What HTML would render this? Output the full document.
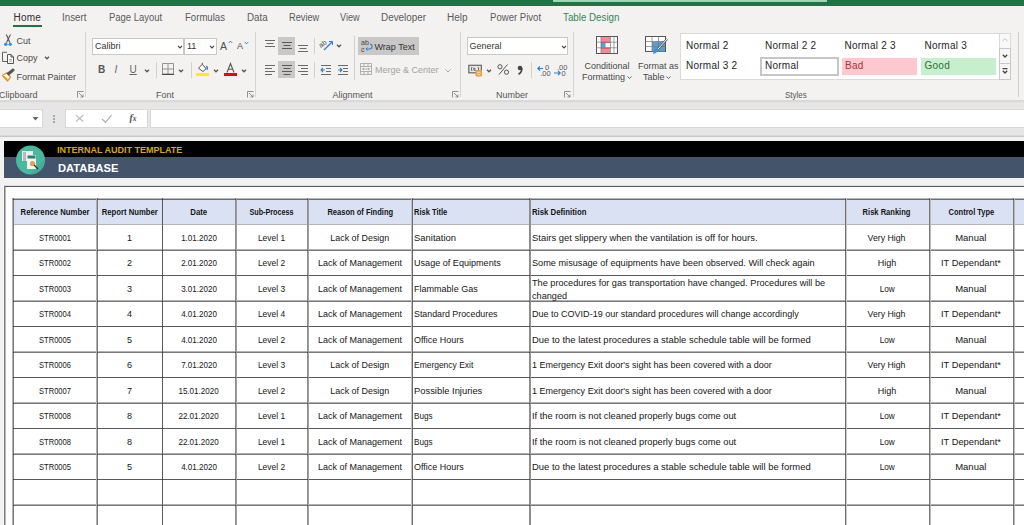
<!DOCTYPE html>
<html><head><meta charset="utf-8">
<style>
*{margin:0;padding:0;box-sizing:border-box}
html,body{width:1024px;height:525px;overflow:hidden;background:#f2f2f2;font-family:"Liberation Sans",sans-serif;position:relative}
.a{position:absolute}
.t{position:absolute;white-space:pre;line-height:1}
.hl{position:absolute;height:2px;background:linear-gradient(#a8a8a8,#6c6c6c)}
.vl{position:absolute;width:2px;background:linear-gradient(90deg,#a0a0a0,#6c6c6c)}
.ct{position:absolute;white-space:pre;font-size:9px;color:#161616;line-height:12px}
.hd{position:absolute;white-space:pre;font-size:9px;font-weight:bold;color:#141414;line-height:12px}
</style></head><body>

<!-- top bar -->
<div class="a" style="left:0;top:0;width:1024px;height:6px;background:#217346"></div>
<div class="a" style="left:553px;top:0;width:274px;height:2px;background:#a6d3b8"></div>
<div class="a" style="left:0;top:6px;width:1024px;height:95px;background:#f3f2f1"></div>

<!-- tabs -->
<div class="t" style="left:13.5px;top:12.9px;font-size:10px;color:#303030;letter-spacing:0.2px">Home</div>
<div class="a" style="left:13px;top:25px;width:29px;height:2px;background:#217346"></div>
<div class="t" style="left:62px;top:12.9px;font-size:10px;color:#5a5a5a;transform:scaleX(0.975);transform-origin:0 0">Insert</div>
<div class="t" style="left:109px;top:12.9px;font-size:10px;color:#5a5a5a;transform:scaleX(0.948);transform-origin:0 0">Page Layout</div>
<div class="t" style="left:185px;top:12.9px;font-size:10px;color:#5a5a5a;transform:scaleX(0.959);transform-origin:0 0">Formulas</div>
<div class="t" style="left:246.5px;top:12.9px;font-size:10px;color:#5a5a5a;transform:scaleX(0.98);transform-origin:0 0">Data</div>
<div class="t" style="left:288.5px;top:12.9px;font-size:10px;color:#5a5a5a;transform:scaleX(0.922);transform-origin:0 0">Review</div>
<div class="t" style="left:339.5px;top:12.9px;font-size:10px;color:#5a5a5a;transform:scaleX(0.909);transform-origin:0 0">View</div>
<div class="t" style="left:381px;top:12.9px;font-size:10px;color:#5a5a5a;transform:scaleX(0.989);transform-origin:0 0">Developer</div>
<div class="t" style="left:447px;top:12.9px;font-size:10px;color:#5a5a5a">Help</div>
<div class="t" style="left:489.5px;top:12.9px;font-size:10px;color:#5a5a5a;transform:scaleX(0.958);transform-origin:0 0">Power Pivot</div>
<div class="t" style="left:562.5px;top:12.9px;font-size:10px;color:#2e8a57;transform:scaleX(0.976);transform-origin:0 0">Table Design</div>

<!-- Clipboard group -->
<svg class="a" style="left:0;top:30px" width="16" height="20" viewBox="0 0 16 20">
 <path d="M6.3 4.5 L9.8 12.5 M10.5 4.5 L6.5 12.5" stroke="#555" stroke-width="1.1" fill="none"/>
 <circle cx="5.8" cy="14.2" r="1.8" fill="#3d8fd8"/>
 <circle cx="10.2" cy="14.2" r="1.7" fill="#3d8fd8"/>
</svg>
<div class="t" style="left:16.5px;top:36.9px;font-size:9px;color:#484848">Cut</div>
<svg class="a" style="left:0;top:48px" width="16" height="20" viewBox="0 0 16 20">
 <path d="M7 13.5 H2.5 V4.3 H7" stroke="#606060" stroke-width="1" fill="none"/>
 <path d="M7.5 6.5 H11 L13.5 9 V15.5 H7.5 Z" fill="#fafafa" stroke="#555" stroke-width="1"/>
 <path d="M11 6.5 V9 H13.5" stroke="#555" stroke-width="1" fill="none"/>
 <path d="M9.3 11.5 H11.7 M9.3 13.1 H11.7" stroke="#888" stroke-width="0.8"/>
</svg>
<div class="t" style="left:16.5px;top:54.3px;font-size:9px;color:#484848">Copy</div>
<svg class="a" style="left:44px;top:56px" width="6" height="4" viewBox="0 0 6 4"><path d="M1 0.8 L3 2.8 L5 0.8" stroke="#555" fill="none" stroke-width="1.3"/></svg>
<svg class="a" style="left:0;top:64px" width="16" height="20" viewBox="0 0 16 20">
 <path d="M2.5 11.5 L6.8 8.8 L10.5 13 L7.5 17 Z" fill="#fff" stroke="#e29a1c" stroke-width="1.3" stroke-linejoin="round"/>
 <path d="M4 12.5 L7.5 15.5" stroke="#e29a1c" stroke-width="1.2"/>
 <path d="M7.5 10.5 L12.5 6.5" stroke="#555" stroke-width="3"/>
 <circle cx="13" cy="6" r="1.6" fill="#555"/>
</svg>
<div class="t" style="left:16.5px;top:73.0px;font-size:9px;color:#484848">Format Painter</div>
<div class="t" style="left:-1px;top:91.1px;font-size:9px;color:#555">Clipboard</div>
<svg class="a" style="left:77px;top:91px" width="7" height="7" viewBox="0 0 7 7"><path d="M0.5 6.5 V0.5 H6.5 M2 2 L6 6 M6 3.5 V6 H3.5" stroke="#777" fill="none" stroke-width="0.8"/></svg>
<div class="a" style="left:85px;top:32px;width:1px;height:65px;background:#d4d4d4"></div>

<!-- Font group -->
<div class="a" style="left:92px;top:38px;width:92px;height:17px;background:#fff;border:1px solid #c8c8c8"></div>
<div class="t" style="left:95px;top:42.2px;font-size:9px;color:#333">Calibri</div>
<svg class="a" style="left:177px;top:45px" width="6" height="4" viewBox="0 0 6 4"><path d="M1 0.8 L3 2.8 L5 0.8" stroke="#444" fill="none" stroke-width="1.2"/></svg>
<div class="a" style="left:184px;top:38px;width:33px;height:17px;background:#fff;border:1px solid #c8c8c8"></div>
<div class="t" style="left:187px;top:42.2px;font-size:9px;color:#333">11</div>
<svg class="a" style="left:209px;top:45px" width="6" height="4" viewBox="0 0 6 4"><path d="M1 0.8 L3 2.8 L5 0.8" stroke="#444" fill="none" stroke-width="1.2"/></svg>
<div class="t" style="left:220px;top:40.6px;font-size:10.5px;color:#505050">A</div>
<svg class="a" style="left:228px;top:40px" width="5" height="4" viewBox="0 0 5 4"><path d="M0.7 3 L2.5 1.2 L4.3 3" stroke="#2f7fd0" fill="none" stroke-width="1"/></svg>
<div class="t" style="left:237px;top:41.8px;font-size:9px;color:#505050">A</div>
<svg class="a" style="left:244px;top:40.5px" width="5" height="4" viewBox="0 0 5 4"><path d="M0.7 1 L2.5 2.8 L4.3 1" stroke="#2f7fd0" fill="none" stroke-width="1"/></svg>
<div class="t" style="left:98px;top:64.5px;font-size:10px;font-weight:bold;color:#555">B</div>
<div class="t" style="left:114.5px;top:64.5px;font-size:10px;font-style:italic;color:#666">I</div>
<div class="t" style="left:129.5px;top:64.5px;font-size:10px;color:#666;text-decoration:underline">U</div>
<svg class="a" style="left:143.5px;top:69px" width="6" height="4" viewBox="0 0 6 4"><path d="M1 0.8 L3 2.8 L5 0.8" stroke="#555" fill="none" stroke-width="1.3"/></svg>
<div class="a" style="left:156px;top:62px;width:1px;height:16px;background:#d0d0d0"></div>
<svg class="a" style="left:162px;top:63px" width="12" height="12" viewBox="0 0 12 12"><path d="M0.5 0.5 H11.5 V11.5 H0.5 Z M6 0.5 V11.5 M0.5 6 H11.5" stroke="#8a8a8a" fill="none" stroke-width="0.9"/><path d="M0 11.3 H12" stroke="#444" stroke-width="1.2"/></svg>
<svg class="a" style="left:178px;top:69px" width="6" height="4" viewBox="0 0 6 4"><path d="M1 0.8 L3 2.8 L5 0.8" stroke="#555" fill="none" stroke-width="1.3"/></svg>
<div class="a" style="left:190.5px;top:62px;width:1px;height:16px;background:#d0d0d0"></div>
<svg class="a" style="left:196px;top:62px" width="13" height="11" viewBox="0 0 13 11"><path d="M2.5 6.3 L6.3 2.2 L10 6.8 L7 9.5 Z" fill="#fff" stroke="#555" stroke-width="1"/><path d="M6.3 2.2 V0.8" stroke="#555" stroke-width="1"/><path d="M10.3 4 Q12 5.5 11 7.8" stroke="#2f7fd0" fill="none" stroke-width="1.4"/></svg>
<div class="a" style="left:196px;top:73px;width:13px;height:3px;background:#ffee00"></div>
<svg class="a" style="left:213px;top:69px" width="6" height="4" viewBox="0 0 6 4"><path d="M1 0.8 L3 2.8 L5 0.8" stroke="#555" fill="none" stroke-width="1.3"/></svg>
<svg class="a" style="left:224px;top:62px" width="13" height="11" viewBox="0 0 13 11"><path d="M3 10.5 L6.5 1.5 L10 10.5 M4.3 7.3 H8.7" stroke="#555" fill="none" stroke-width="1.1"/></svg>
<div class="a" style="left:224px;top:73px;width:13px;height:3px;background:#f20000"></div>
<svg class="a" style="left:241px;top:69px" width="6" height="4" viewBox="0 0 6 4"><path d="M1 0.8 L3 2.8 L5 0.8" stroke="#555" fill="none" stroke-width="1.3"/></svg>
<div class="t" style="left:156px;top:91.1px;font-size:9px;color:#555">Font</div>
<svg class="a" style="left:247px;top:91px" width="7" height="7" viewBox="0 0 7 7"><path d="M0.5 6.5 V0.5 H6.5 M2 2 L6 6 M6 3.5 V6 H3.5" stroke="#777" fill="none" stroke-width="0.8"/></svg>
<div class="a" style="left:255px;top:32px;width:1px;height:65px;background:#d4d4d4"></div>

<!-- Alignment group -->
<svg class="a" style="left:264px;top:39px" width="12" height="10" viewBox="0 0 12 10"><path d="M1 1.5 H11 M2.5 4.5 H9.5 M1 7.5 H11" stroke="#6a6a6a" stroke-width="1.1"/></svg>
<div class="a" style="left:278px;top:37px;width:17px;height:18px;background:#c8c8c8"></div>
<svg class="a" style="left:281px;top:41px" width="12" height="10" viewBox="0 0 12 10"><path d="M1 1.5 H11 M2.5 4.5 H9.5 M1 7.5 H11" stroke="#5a5a5a" stroke-width="1.1"/></svg>
<svg class="a" style="left:297px;top:44px" width="12" height="10" viewBox="0 0 12 10"><path d="M1 1.5 H11 M2.5 4.5 H9.5 M1 7.5 H11" stroke="#6a6a6a" stroke-width="1.1"/></svg>
<div class="a" style="left:314px;top:38px;width:1px;height:16px;background:#d0d0d0"></div>
<svg class="a" style="left:319px;top:38px" width="15" height="14" viewBox="0 0 15 14"><text x="0" y="8" font-size="7" fill="#444" font-family="Liberation Sans" transform="rotate(-35 4 6)">ab</text><path d="M5 12 L13 4" stroke="#2f7fd0" stroke-width="1.2"/><path d="M10 3.5 L13.5 3.5 L13.5 7" stroke="#2f7fd0" fill="none" stroke-width="1"/></svg>
<svg class="a" style="left:335.5px;top:44px" width="6" height="4" viewBox="0 0 6 4"><path d="M1 0.8 L3 2.8 L5 0.8" stroke="#555" fill="none" stroke-width="1.3"/></svg>
<div class="a" style="left:354px;top:36px;width:1px;height:44px;background:#d0d0d0"></div>
<div class="a" style="left:358px;top:37px;width:61px;height:18px;background:#c8c8c8"></div>
<svg class="a" style="left:360px;top:38px" width="14" height="16" viewBox="0 0 14 16"><text x="1" y="7" font-size="7" fill="#444" font-family="Liberation Sans">ab</text><text x="1" y="14" font-size="7" fill="#444" font-family="Liberation Sans">c</text><path d="M6 11 H10 Q12 11 12 8.5 Q12 6 10 6" stroke="#2f7fd0" fill="none" stroke-width="1.1"/><path d="M7.5 9.5 L6 11 L7.5 12.5" stroke="#2f7fd0" fill="none" stroke-width="1"/></svg>
<div class="t" style="left:374.5px;top:42.5px;font-size:9px;color:#333">Wrap Text</div>
<svg class="a" style="left:264px;top:64px" width="12" height="11" viewBox="0 0 12 11"><path d="M1 1.5 H11 M1 4.5 H8 M1 7.5 H11 M1 10.5 H8" stroke="#6a6a6a" stroke-width="1.1"/></svg>
<div class="a" style="left:278px;top:61px;width:17px;height:17px;background:#c8c8c8"></div>
<svg class="a" style="left:281px;top:64px" width="12" height="11" viewBox="0 0 12 11"><path d="M1 1.5 H11 M2.5 4.5 H9.5 M1 7.5 H11 M2.5 10.5 H9.5" stroke="#5a5a5a" stroke-width="1.1"/></svg>
<svg class="a" style="left:297px;top:64px" width="12" height="11" viewBox="0 0 12 11"><path d="M1 1.5 H11 M4 4.5 H11 M1 7.5 H11 M4 10.5 H11" stroke="#6a6a6a" stroke-width="1.1"/></svg>
<div class="a" style="left:314px;top:62px;width:1px;height:16px;background:#d0d0d0"></div>
<svg class="a" style="left:320px;top:64px" width="12" height="11" viewBox="0 0 12 11"><path d="M1 1.5 H11 M6 4.5 H11 M6 7.5 H11 M1 10.5 H11" stroke="#6a6a6a" stroke-width="1.1"/><path d="M5 6 H1 M3 4 L1 6 L3 8" stroke="#2f7fd0" fill="none" stroke-width="1.1"/></svg>
<svg class="a" style="left:337px;top:64px" width="12" height="11" viewBox="0 0 12 11"><path d="M1 1.5 H11 M6 4.5 H11 M6 7.5 H11 M1 10.5 H11" stroke="#6a6a6a" stroke-width="1.1"/><path d="M1 6 H5 M3 4 L5 6 L3 8" stroke="#2f7fd0" fill="none" stroke-width="1.1"/></svg>
<svg class="a" style="left:360px;top:63px" width="12" height="12" viewBox="0 0 12 12"><path d="M0.5 0.5 H11.5 V11.5 H0.5 Z M0.5 3.5 H11.5 M0.5 8.5 H11.5 M4 0.5 V3.5 M8 0.5 V3.5 M4 8.5 V11.5 M8 8.5 V11.5 M2.5 6 H9.5 M4 5 L2.5 6 L4 7 M8 5 L9.5 6 L8 7" stroke="#a8a8a8" fill="none" stroke-width="0.9"/></svg>
<div class="t" style="left:375px;top:66.3px;font-size:9px;color:#a3a3a3">Merge &amp; Center</div>
<svg class="a" style="left:445px;top:69px" width="6" height="4" viewBox="0 0 6 4"><path d="M0.5 0.5 L3 3 L5.5 0.5" stroke="#aaa" fill="none" stroke-width="1"/></svg>
<div class="t" style="left:332.5px;top:91.1px;font-size:9px;color:#555">Alignment</div>
<svg class="a" style="left:452px;top:91px" width="7" height="7" viewBox="0 0 7 7"><path d="M0.5 6.5 V0.5 H6.5 M2 2 L6 6 M6 3.5 V6 H3.5" stroke="#777" fill="none" stroke-width="0.8"/></svg>
<div class="a" style="left:460px;top:32px;width:1px;height:65px;background:#d4d4d4"></div>

<!-- Number group -->
<div class="a" style="left:467px;top:37px;width:101px;height:18px;background:#fff;border:1px solid #c8c8c8"></div>
<div class="t" style="left:469.5px;top:42.2px;font-size:9px;color:#333">General</div>
<svg class="a" style="left:561px;top:45px" width="6" height="4" viewBox="0 0 6 4"><path d="M1 0.8 L3 2.8 L5 0.8" stroke="#444" fill="none" stroke-width="1.2"/></svg>
<svg class="a" style="left:468px;top:64px" width="16" height="13" viewBox="0 0 16 13">
 <rect x="0.8" y="1.3" width="12.5" height="7.5" fill="#e8e8e8" stroke="#666" stroke-width="1.2"/>
 <path d="M4 3 Q2.5 5 4 7 M10 3 Q11.5 5 10 7" stroke="#666" fill="none" stroke-width="1"/>
 <path d="M6 3.5 Q5 5 6 6.5 H8 M5.5 4.5 H7.5 M5.5 5.5 H7.5" stroke="#666" fill="none" stroke-width="0.7"/>
 <rect x="7.5" y="6" width="6.5" height="6.5" rx="1" fill="#eaa040"/>
 <path d="M9 8.3 H12.5 M9 10 Q10.75 11.5 12.5 10" stroke="#fff" fill="none" stroke-width="0.7"/>
</svg>
<svg class="a" style="left:486px;top:69px" width="6" height="4" viewBox="0 0 6 4"><path d="M1 0.8 L3 2.8 L5 0.8" stroke="#555" fill="none" stroke-width="1.3"/></svg>
<svg class="a" style="left:497px;top:64px" width="13" height="11" viewBox="0 0 13 11">
 <circle cx="3" cy="2.8" r="2.1" fill="none" stroke="#555" stroke-width="1"/>
 <circle cx="9.5" cy="8.2" r="2.1" fill="none" stroke="#555" stroke-width="1"/>
 <path d="M10.5 0.5 L2 10.5" stroke="#555" stroke-width="1"/>
</svg>
<svg class="a" style="left:516px;top:64px" width="8" height="11" viewBox="0 0 8 11">
 <circle cx="4" cy="4" r="2.3" fill="#444"/>
 <path d="M5.8 4 Q6.2 8 2.5 10.3" stroke="#444" fill="none" stroke-width="1.6"/>
</svg>
<div class="a" style="left:531px;top:62px;width:1px;height:16px;background:#d0d0d0"></div>
<svg class="a" style="left:536px;top:63px" width="15" height="13" viewBox="0 0 15 13">
 <path d="M7 5.5 H2 M4 3.3 L1.8 5.5 L4 7.7" stroke="#2f7fd0" fill="none" stroke-width="1.2"/>
 <text x="9" y="6.5" font-size="7.5" fill="#555" font-family="Liberation Sans">0</text>
 <text x="4.2" y="12.5" font-size="7.5" fill="#555" font-family="Liberation Sans">.00</text>
</svg>
<svg class="a" style="left:553px;top:63px" width="15" height="13" viewBox="0 0 15 13">
 <text x="4" y="6.5" font-size="7.5" fill="#555" font-family="Liberation Sans">.00</text>
 <path d="M1 10 H7 M5 7.8 L7.2 10 L5 12.2" stroke="#2f7fd0" fill="none" stroke-width="1.2"/>
 <text x="8.5" y="12.5" font-size="7.5" fill="#555" font-family="Liberation Sans">0</text>
</svg>
<div class="t" style="left:496px;top:91.1px;font-size:9px;color:#555">Number</div>
<svg class="a" style="left:564px;top:91px" width="7" height="7" viewBox="0 0 7 7"><path d="M0.5 6.5 V0.5 H6.5 M2 2 L6 6 M6 3.5 V6 H3.5" stroke="#777" fill="none" stroke-width="0.8"/></svg>
<div class="a" style="left:573px;top:32px;width:1px;height:65px;background:#d4d4d4"></div>

<!-- Styles -->
<svg class="a" style="left:596px;top:36px" width="23" height="18" viewBox="0 0 23 18">
 <rect x="0.5" y="0.5" width="21" height="17" fill="#fff" stroke="#555" stroke-width="1"/>
 <rect x="5" y="1" width="9" height="5" fill="#f48a94"/>
 <rect x="5" y="12" width="9" height="5" fill="#f48a94"/>
 <rect x="5" y="6.5" width="4.5" height="5" fill="#5b9bd5"/>
 <path d="M5 6.5 H14 M5 12 H14" stroke="#e0283a" stroke-width="0.8"/>
 <path d="M5 0.5 V17.5 M14.5 0.5 V17.5 M18 0.5 V17.5 M0.5 6.2 H21.5 M0.5 11.8 H21.5" stroke="#777" stroke-width="0.7"/>
</svg>
<div class="t" style="left:584.5px;top:61.5px;font-size:9px;color:#484848">Conditional</div>
<div class="t" style="left:582px;top:73.2px;font-size:9px;color:#484848">Formatting</div>
<svg class="a" style="left:627px;top:76px" width="5" height="4" viewBox="0 0 5 4"><path d="M0.5 0.5 L2.5 2.5 L4.5 0.5" stroke="#555" fill="none" stroke-width="0.9"/></svg>
<svg class="a" style="left:645px;top:36px" width="25" height="19" viewBox="0 0 25 19">
 <rect x="0.5" y="0.5" width="20" height="15" fill="#fff" stroke="#555"/>
 <rect x="7" y="5.5" width="13" height="10" fill="#5b9bd5"/>
 <path d="M0.5 5.5 H20.5 M0.5 10.5 H20.5 M7 0.5 V15.5 M13.5 0.5 V15.5" stroke="#777" stroke-width="0.7"/>
 <path d="M22 3 L13 13" stroke="#555" stroke-width="2.2"/>
 <path d="M22 3 L13 13" stroke="#fff" stroke-width="1"/>
 <path d="M9 14 Q11 11 13.5 13 Q13 17 8 18 Z" fill="#3d8fd8"/>
</svg>
<div class="t" style="left:638px;top:61.5px;font-size:9px;color:#484848">Format as</div>
<div class="t" style="left:643px;top:73.2px;font-size:9px;color:#484848">Table</div>
<svg class="a" style="left:666px;top:76px" width="5" height="4" viewBox="0 0 5 4"><path d="M0.5 0.5 L2.5 2.5 L4.5 0.5" stroke="#555" fill="none" stroke-width="0.9"/></svg>

<div class="a" style="left:680px;top:33px;width:331px;height:47px;background:#fff;border:1px solid #dadada"></div>
<div class="t" style="left:686px;top:40.5px;font-size:10px;letter-spacing:0.25px;color:#262626">Normal 2</div>
<div class="t" style="left:765px;top:40.5px;font-size:10px;letter-spacing:0.25px;color:#262626">Normal 2 2</div>
<div class="t" style="left:844.5px;top:40.5px;font-size:10px;letter-spacing:0.25px;color:#262626">Normal 2 3</div>
<div class="t" style="left:924.5px;top:40.5px;font-size:10px;letter-spacing:0.25px;color:#262626">Normal 3</div>
<div class="t" style="left:686px;top:61.2px;font-size:10px;letter-spacing:0.25px;color:#262626">Normal 3 2</div>
<div class="a" style="left:760px;top:57px;width:79px;height:19px;border:2px solid #c6c6c6;background:#fff"></div>
<div class="t" style="left:765px;top:61.2px;font-size:10px;letter-spacing:0.25px;color:#262626">Normal</div>
<div class="a" style="left:842px;top:58px;width:75px;height:17px;background:#ffc7ce"></div>
<div class="t" style="left:845px;top:61.2px;font-size:10px;letter-spacing:0.25px;color:#b0303a">Bad</div>
<div class="a" style="left:921px;top:58px;width:75px;height:17px;background:#c6efce"></div>
<div class="t" style="left:924.5px;top:61.2px;font-size:10px;letter-spacing:0.25px;color:#2f6e3a">Good</div>
<div class="a" style="left:999px;top:33px;width:12px;height:47px;border:1px solid #dadada;background:#f8f8f8"></div>
<div class="a" style="left:999px;top:48px;width:12px;height:16px;border:1px solid #c8c8c8;background:#f6f6f6"></div>
<div class="a" style="left:999px;top:63px;width:12px;height:17px;border:1px solid #c8c8c8;background:#f6f6f6"></div>
<svg class="a" style="left:1002px;top:38px" width="6" height="4" viewBox="0 0 6 4"><path d="M0.5 3 L3 0.8 L5.5 3" stroke="#bbb" fill="none" stroke-width="0.9"/></svg>
<svg class="a" style="left:1002px;top:54px" width="6" height="4" viewBox="0 0 6 4"><path d="M0.8 0.8 L3 3 L5.2 0.8" stroke="#444" fill="none" stroke-width="1.3"/></svg>
<svg class="a" style="left:1002px;top:68px" width="6" height="6" viewBox="0 0 6 6"><path d="M0.5 0.7 H5.5 M0.8 2.8 L3 5 L5.2 2.8" stroke="#444" fill="none" stroke-width="1.3"/></svg>
<div class="t" style="left:785px;top:91.1px;font-size:9px;color:#555;transform:scaleX(0.89);transform-origin:0 0">Styles</div>
<div class="a" style="left:1018px;top:32px;width:1px;height:65px;background:#cfcfcf"></div>

<!-- formula bar -->
<div class="a" style="left:0;top:101px;width:1024px;height:34px;background:#e6e6e6"></div>
<div class="a" style="left:0;top:100px;width:1024px;height:2px;background:#d9d9d9"></div>
<div class="a" style="left:0;top:102px;width:1024px;height:1px;background:#e2e2e2"></div>
<div class="a" style="left:0;top:135px;width:1024px;height:1px;background:#d8d8d8"></div>
<div class="a" style="left:0;top:136px;width:1024px;height:1px;background:#c8c8c8"></div>
<div class="a" style="left:0;top:109px;width:43px;height:19px;background:#fff;border:1px solid #d8d8d8;border-left:none"></div>
<svg class="a" style="left:32px;top:116.5px" width="7" height="4" viewBox="0 0 7 4"><path d="M0.5 0 H6.5 L3.5 3.5 Z" fill="#666"/></svg>
<div class="a" style="left:53px;top:114.5px;width:2px;height:2px;background:#aaa"></div>
<div class="a" style="left:53px;top:117.5px;width:2px;height:2px;background:#aaa"></div>
<div class="a" style="left:53px;top:120.5px;width:2px;height:2px;background:#aaa"></div>
<div class="a" style="left:65px;top:109px;width:83px;height:19px;background:#fff;border:1px solid #d8d8d8"></div>
<svg class="a" style="left:75px;top:114px" width="10" height="9" viewBox="0 0 10 9"><path d="M1 1.2 L8.2 7.6 M8.2 1.2 L1 7.6" stroke="#b4b4b4" stroke-width="1.1"/></svg>
<svg class="a" style="left:101px;top:114px" width="12" height="10" viewBox="0 0 12 10"><path d="M1 5 L4.5 8.3 L10.5 1.2" stroke="#b4b4b4" fill="none" stroke-width="1.3"/></svg>
<div class="t" style="left:129.5px;top:113px;font-size:10px;font-style:italic;font-weight:bold;font-family:'Liberation Serif';color:#555">f<span style="font-size:7.5px">x</span></div>
<div class="a" style="left:150px;top:109px;width:880px;height:19px;background:#fff;border:1px solid #d8d8d8"></div>

<div class="a" style="left:0;top:137px;width:1024px;height:388px;background:#f2f2f2"></div>
<div class="a" style="left:4px;top:141px;width:1020px;height:16px;background:#000"></div>
<div class="a" style="left:4px;top:157px;width:1020px;height:21px;background:#44546a"></div>
<div class="t" style="left:57px;top:146.3px;font-size:9px;font-weight:bold;color:#dca60a">INTERNAL AUDIT TEMPLATE</div>
<div class="t" style="left:58px;top:163.3px;font-size:11.2px;font-weight:bold;color:#fff">DATABASE</div>
<svg class="a" style="left:14px;top:143px" width="34" height="34" viewBox="0 0 34 34">
<circle cx="16.5" cy="17" r="14.5" fill="#48b89e"/>
<path d="M20 27 L30 17 A14.5 14.5 0 0 1 17 31.5 Z" fill="#3fa68d" opacity="0.6"/>
<rect x="8" y="8" width="11" height="10" fill="#eeeeee"/>
<rect x="9" y="9" width="3" height="9" fill="#b9b9b9"/>
<rect x="13" y="12" width="9" height="14" fill="#f4f4f4"/>
<rect x="13.5" y="12.5" width="8" height="3" fill="#2f7f70"/>
<circle cx="18.5" cy="20.5" r="2.6" fill="#e8a04a"/>
<line x1="20" y1="22" x2="24" y2="26" stroke="#333" stroke-width="1.2"/>
</svg>
<div class="a" style="left:4px;top:185px;width:1030px;height:400px;background:#fff"></div>
<div class="a" style="left:4px;top:185px;width:1030px;height:1px;background:#e0e0e0"></div>
<div class="a" style="left:4px;top:186px;width:1030px;height:1px;background:#5a5a5a"></div>
<div class="a" style="left:3px;top:186px;width:1px;height:400px;background:#f9f9f9"></div>
<div class="a" style="left:4px;top:186px;width:1px;height:400px;background:#7a7a7a"></div>
<div class="a" style="left:5px;top:187px;width:1px;height:400px;background:#b8b8b8"></div>
<div class="a" style="left:13px;top:199px;width:1027px;height:25px;background:#d9e1f2"></div>
<div class="a" style="left:12px;top:198px;width:1020px;height:1px;background:#b8b8b8"></div>
<div class="a" style="left:12px;top:199px;width:1020px;height:1px;background:#686c74"></div>
<div class="a" style="left:12px;top:224px;width:1020px;height:1px;background:#b2b4b8"></div>
<div class="a" style="left:12px;top:249px;width:1020px;height:1px;background:#b0b0b0"></div>
<div class="a" style="left:12px;top:250px;width:1020px;height:1px;background:#7a7a7a"></div>
<div class="a" style="left:12px;top:300px;width:1020px;height:1px;background:#b0b0b0"></div>
<div class="a" style="left:12px;top:301px;width:1020px;height:1px;background:#7a7a7a"></div>
<div class="a" style="left:12px;top:351px;width:1020px;height:1px;background:#b0b0b0"></div>
<div class="a" style="left:12px;top:352px;width:1020px;height:1px;background:#7a7a7a"></div>
<div class="a" style="left:12px;top:402px;width:1020px;height:1px;background:#b0b0b0"></div>
<div class="a" style="left:12px;top:403px;width:1020px;height:1px;background:#7a7a7a"></div>
<div class="a" style="left:12px;top:453px;width:1020px;height:1px;background:#b0b0b0"></div>
<div class="a" style="left:12px;top:454px;width:1020px;height:1px;background:#7a7a7a"></div>
<div class="a" style="left:12px;top:504px;width:1020px;height:1px;background:#b0b0b0"></div>
<div class="a" style="left:12px;top:505px;width:1020px;height:1px;background:#7a7a7a"></div>
<div class="a" style="left:12px;top:275px;width:1020px;height:1px;background:#5a5a5a"></div>
<div class="a" style="left:12px;top:326px;width:1020px;height:1px;background:#5a5a5a"></div>
<div class="a" style="left:12px;top:377px;width:1020px;height:1px;background:#5a5a5a"></div>
<div class="a" style="left:12px;top:428px;width:1020px;height:1px;background:#5a5a5a"></div>
<div class="a" style="left:12px;top:479px;width:1020px;height:1px;background:#5a5a5a"></div>
<div class="a" style="left:12px;top:198px;width:1px;height:330px;background:#b0b0b0"></div>
<div class="a" style="left:13px;top:198px;width:1px;height:330px;background:#7a7a7a"></div>
<div class="a" style="left:96px;top:198px;width:1px;height:330px;background:#b0b0b0"></div>
<div class="a" style="left:97px;top:198px;width:1px;height:330px;background:#7a7a7a"></div>
<div class="a" style="left:162px;top:198px;width:1px;height:330px;background:#5a5a5a"></div>
<div class="a" style="left:235px;top:198px;width:1px;height:330px;background:#8c8c8c"></div>
<div class="a" style="left:236px;top:198px;width:1px;height:330px;background:#a0a0a0"></div>
<div class="a" style="left:307px;top:198px;width:1px;height:330px;background:#8c8c8c"></div>
<div class="a" style="left:308px;top:198px;width:1px;height:330px;background:#a0a0a0"></div>
<div class="a" style="left:411px;top:198px;width:1px;height:330px;background:#c0c0c0"></div>
<div class="a" style="left:412px;top:198px;width:1px;height:330px;background:#6c6c6c"></div>
<div class="a" style="left:529px;top:198px;width:1px;height:330px;background:#8c8c8c"></div>
<div class="a" style="left:530px;top:198px;width:1px;height:330px;background:#909090"></div>
<div class="a" style="left:845px;top:198px;width:1px;height:330px;background:#707070"></div>
<div class="a" style="left:846px;top:198px;width:1px;height:330px;background:#c8c8c8"></div>
<div class="a" style="left:929px;top:198px;width:1px;height:330px;background:#7a7a7a"></div>
<div class="a" style="left:930px;top:198px;width:1px;height:330px;background:#b8b8b8"></div>
<div class="a" style="left:1013px;top:198px;width:1px;height:330px;background:#7a7a7a"></div>
<div class="a" style="left:1014px;top:198px;width:1px;height:330px;background:#b8b8b8"></div>
<div class="a" style="left:13px;top:199px;width:1px;height:1px;background:#3c3c3c"></div>
<div class="a" style="left:13px;top:250px;width:1px;height:1px;background:#3c3c3c"></div>
<div class="a" style="left:13px;top:301px;width:1px;height:1px;background:#3c3c3c"></div>
<div class="a" style="left:13px;top:352px;width:1px;height:1px;background:#3c3c3c"></div>
<div class="a" style="left:13px;top:403px;width:1px;height:1px;background:#3c3c3c"></div>
<div class="a" style="left:13px;top:454px;width:1px;height:1px;background:#3c3c3c"></div>
<div class="a" style="left:13px;top:505px;width:1px;height:1px;background:#3c3c3c"></div>
<div class="a" style="left:13px;top:275px;width:1px;height:1px;background:#3c3c3c"></div>
<div class="a" style="left:13px;top:326px;width:1px;height:1px;background:#3c3c3c"></div>
<div class="a" style="left:13px;top:377px;width:1px;height:1px;background:#3c3c3c"></div>
<div class="a" style="left:13px;top:428px;width:1px;height:1px;background:#3c3c3c"></div>
<div class="a" style="left:13px;top:479px;width:1px;height:1px;background:#3c3c3c"></div>
<div class="a" style="left:97px;top:199px;width:1px;height:1px;background:#3c3c3c"></div>
<div class="a" style="left:97px;top:250px;width:1px;height:1px;background:#3c3c3c"></div>
<div class="a" style="left:97px;top:301px;width:1px;height:1px;background:#3c3c3c"></div>
<div class="a" style="left:97px;top:352px;width:1px;height:1px;background:#3c3c3c"></div>
<div class="a" style="left:97px;top:403px;width:1px;height:1px;background:#3c3c3c"></div>
<div class="a" style="left:97px;top:454px;width:1px;height:1px;background:#3c3c3c"></div>
<div class="a" style="left:97px;top:505px;width:1px;height:1px;background:#3c3c3c"></div>
<div class="a" style="left:97px;top:275px;width:1px;height:1px;background:#3c3c3c"></div>
<div class="a" style="left:97px;top:326px;width:1px;height:1px;background:#3c3c3c"></div>
<div class="a" style="left:97px;top:377px;width:1px;height:1px;background:#3c3c3c"></div>
<div class="a" style="left:97px;top:428px;width:1px;height:1px;background:#3c3c3c"></div>
<div class="a" style="left:97px;top:479px;width:1px;height:1px;background:#3c3c3c"></div>
<div class="a" style="left:162px;top:199px;width:1px;height:1px;background:#3c3c3c"></div>
<div class="a" style="left:162px;top:250px;width:1px;height:1px;background:#3c3c3c"></div>
<div class="a" style="left:162px;top:301px;width:1px;height:1px;background:#3c3c3c"></div>
<div class="a" style="left:162px;top:352px;width:1px;height:1px;background:#3c3c3c"></div>
<div class="a" style="left:162px;top:403px;width:1px;height:1px;background:#3c3c3c"></div>
<div class="a" style="left:162px;top:454px;width:1px;height:1px;background:#3c3c3c"></div>
<div class="a" style="left:162px;top:505px;width:1px;height:1px;background:#3c3c3c"></div>
<div class="a" style="left:162px;top:275px;width:1px;height:1px;background:#3c3c3c"></div>
<div class="a" style="left:162px;top:326px;width:1px;height:1px;background:#3c3c3c"></div>
<div class="a" style="left:162px;top:377px;width:1px;height:1px;background:#3c3c3c"></div>
<div class="a" style="left:162px;top:428px;width:1px;height:1px;background:#3c3c3c"></div>
<div class="a" style="left:162px;top:479px;width:1px;height:1px;background:#3c3c3c"></div>
<div class="a" style="left:235px;top:199px;width:1px;height:1px;background:#3c3c3c"></div>
<div class="a" style="left:235px;top:250px;width:1px;height:1px;background:#3c3c3c"></div>
<div class="a" style="left:235px;top:301px;width:1px;height:1px;background:#3c3c3c"></div>
<div class="a" style="left:235px;top:352px;width:1px;height:1px;background:#3c3c3c"></div>
<div class="a" style="left:235px;top:403px;width:1px;height:1px;background:#3c3c3c"></div>
<div class="a" style="left:235px;top:454px;width:1px;height:1px;background:#3c3c3c"></div>
<div class="a" style="left:235px;top:505px;width:1px;height:1px;background:#3c3c3c"></div>
<div class="a" style="left:235px;top:275px;width:1px;height:1px;background:#3c3c3c"></div>
<div class="a" style="left:235px;top:326px;width:1px;height:1px;background:#3c3c3c"></div>
<div class="a" style="left:235px;top:377px;width:1px;height:1px;background:#3c3c3c"></div>
<div class="a" style="left:235px;top:428px;width:1px;height:1px;background:#3c3c3c"></div>
<div class="a" style="left:235px;top:479px;width:1px;height:1px;background:#3c3c3c"></div>
<div class="a" style="left:307px;top:199px;width:1px;height:1px;background:#3c3c3c"></div>
<div class="a" style="left:307px;top:250px;width:1px;height:1px;background:#3c3c3c"></div>
<div class="a" style="left:307px;top:301px;width:1px;height:1px;background:#3c3c3c"></div>
<div class="a" style="left:307px;top:352px;width:1px;height:1px;background:#3c3c3c"></div>
<div class="a" style="left:307px;top:403px;width:1px;height:1px;background:#3c3c3c"></div>
<div class="a" style="left:307px;top:454px;width:1px;height:1px;background:#3c3c3c"></div>
<div class="a" style="left:307px;top:505px;width:1px;height:1px;background:#3c3c3c"></div>
<div class="a" style="left:307px;top:275px;width:1px;height:1px;background:#3c3c3c"></div>
<div class="a" style="left:307px;top:326px;width:1px;height:1px;background:#3c3c3c"></div>
<div class="a" style="left:307px;top:377px;width:1px;height:1px;background:#3c3c3c"></div>
<div class="a" style="left:307px;top:428px;width:1px;height:1px;background:#3c3c3c"></div>
<div class="a" style="left:307px;top:479px;width:1px;height:1px;background:#3c3c3c"></div>
<div class="a" style="left:412px;top:199px;width:1px;height:1px;background:#3c3c3c"></div>
<div class="a" style="left:412px;top:250px;width:1px;height:1px;background:#3c3c3c"></div>
<div class="a" style="left:412px;top:301px;width:1px;height:1px;background:#3c3c3c"></div>
<div class="a" style="left:412px;top:352px;width:1px;height:1px;background:#3c3c3c"></div>
<div class="a" style="left:412px;top:403px;width:1px;height:1px;background:#3c3c3c"></div>
<div class="a" style="left:412px;top:454px;width:1px;height:1px;background:#3c3c3c"></div>
<div class="a" style="left:412px;top:505px;width:1px;height:1px;background:#3c3c3c"></div>
<div class="a" style="left:412px;top:275px;width:1px;height:1px;background:#3c3c3c"></div>
<div class="a" style="left:412px;top:326px;width:1px;height:1px;background:#3c3c3c"></div>
<div class="a" style="left:412px;top:377px;width:1px;height:1px;background:#3c3c3c"></div>
<div class="a" style="left:412px;top:428px;width:1px;height:1px;background:#3c3c3c"></div>
<div class="a" style="left:412px;top:479px;width:1px;height:1px;background:#3c3c3c"></div>
<div class="a" style="left:529px;top:199px;width:1px;height:1px;background:#3c3c3c"></div>
<div class="a" style="left:529px;top:250px;width:1px;height:1px;background:#3c3c3c"></div>
<div class="a" style="left:529px;top:301px;width:1px;height:1px;background:#3c3c3c"></div>
<div class="a" style="left:529px;top:352px;width:1px;height:1px;background:#3c3c3c"></div>
<div class="a" style="left:529px;top:403px;width:1px;height:1px;background:#3c3c3c"></div>
<div class="a" style="left:529px;top:454px;width:1px;height:1px;background:#3c3c3c"></div>
<div class="a" style="left:529px;top:505px;width:1px;height:1px;background:#3c3c3c"></div>
<div class="a" style="left:529px;top:275px;width:1px;height:1px;background:#3c3c3c"></div>
<div class="a" style="left:529px;top:326px;width:1px;height:1px;background:#3c3c3c"></div>
<div class="a" style="left:529px;top:377px;width:1px;height:1px;background:#3c3c3c"></div>
<div class="a" style="left:529px;top:428px;width:1px;height:1px;background:#3c3c3c"></div>
<div class="a" style="left:529px;top:479px;width:1px;height:1px;background:#3c3c3c"></div>
<div class="a" style="left:845px;top:199px;width:1px;height:1px;background:#3c3c3c"></div>
<div class="a" style="left:845px;top:250px;width:1px;height:1px;background:#3c3c3c"></div>
<div class="a" style="left:845px;top:301px;width:1px;height:1px;background:#3c3c3c"></div>
<div class="a" style="left:845px;top:352px;width:1px;height:1px;background:#3c3c3c"></div>
<div class="a" style="left:845px;top:403px;width:1px;height:1px;background:#3c3c3c"></div>
<div class="a" style="left:845px;top:454px;width:1px;height:1px;background:#3c3c3c"></div>
<div class="a" style="left:845px;top:505px;width:1px;height:1px;background:#3c3c3c"></div>
<div class="a" style="left:845px;top:275px;width:1px;height:1px;background:#3c3c3c"></div>
<div class="a" style="left:845px;top:326px;width:1px;height:1px;background:#3c3c3c"></div>
<div class="a" style="left:845px;top:377px;width:1px;height:1px;background:#3c3c3c"></div>
<div class="a" style="left:845px;top:428px;width:1px;height:1px;background:#3c3c3c"></div>
<div class="a" style="left:845px;top:479px;width:1px;height:1px;background:#3c3c3c"></div>
<div class="a" style="left:929px;top:199px;width:1px;height:1px;background:#3c3c3c"></div>
<div class="a" style="left:929px;top:250px;width:1px;height:1px;background:#3c3c3c"></div>
<div class="a" style="left:929px;top:301px;width:1px;height:1px;background:#3c3c3c"></div>
<div class="a" style="left:929px;top:352px;width:1px;height:1px;background:#3c3c3c"></div>
<div class="a" style="left:929px;top:403px;width:1px;height:1px;background:#3c3c3c"></div>
<div class="a" style="left:929px;top:454px;width:1px;height:1px;background:#3c3c3c"></div>
<div class="a" style="left:929px;top:505px;width:1px;height:1px;background:#3c3c3c"></div>
<div class="a" style="left:929px;top:275px;width:1px;height:1px;background:#3c3c3c"></div>
<div class="a" style="left:929px;top:326px;width:1px;height:1px;background:#3c3c3c"></div>
<div class="a" style="left:929px;top:377px;width:1px;height:1px;background:#3c3c3c"></div>
<div class="a" style="left:929px;top:428px;width:1px;height:1px;background:#3c3c3c"></div>
<div class="a" style="left:929px;top:479px;width:1px;height:1px;background:#3c3c3c"></div>
<div class="a" style="left:1013px;top:199px;width:1px;height:1px;background:#3c3c3c"></div>
<div class="a" style="left:1013px;top:250px;width:1px;height:1px;background:#3c3c3c"></div>
<div class="a" style="left:1013px;top:301px;width:1px;height:1px;background:#3c3c3c"></div>
<div class="a" style="left:1013px;top:352px;width:1px;height:1px;background:#3c3c3c"></div>
<div class="a" style="left:1013px;top:403px;width:1px;height:1px;background:#3c3c3c"></div>
<div class="a" style="left:1013px;top:454px;width:1px;height:1px;background:#3c3c3c"></div>
<div class="a" style="left:1013px;top:505px;width:1px;height:1px;background:#3c3c3c"></div>
<div class="a" style="left:1013px;top:275px;width:1px;height:1px;background:#3c3c3c"></div>
<div class="a" style="left:1013px;top:326px;width:1px;height:1px;background:#3c3c3c"></div>
<div class="a" style="left:1013px;top:377px;width:1px;height:1px;background:#3c3c3c"></div>
<div class="a" style="left:1013px;top:428px;width:1px;height:1px;background:#3c3c3c"></div>
<div class="a" style="left:1013px;top:479px;width:1px;height:1px;background:#3c3c3c"></div>
<div class="hd" style="left:13px;width:84px;top:205.6px;text-align:center"><span style="display:inline-block;transform:scaleX(0.861)">Reference Number</span></div>
<div class="hd" style="left:97px;width:65px;top:205.6px;text-align:center"><span style="display:inline-block;transform:scaleX(0.855)">Report Number</span></div>
<div class="hd" style="left:162px;width:74px;top:205.6px;text-align:center"><span style="display:inline-block;transform:scaleX(0.865)">Date</span></div>
<div class="hd" style="left:236px;width:72px;top:205.6px;text-align:center"><span style="display:inline-block;transform:scaleX(0.803)">Sub-Process</span></div>
<div class="hd" style="left:308px;width:104px;top:205.6px;text-align:center"><span style="display:inline-block;transform:scaleX(0.837)">Reason of Finding</span></div>
<div class="hd" style="left:414px;top:205.6px;transform:scaleX(0.835);transform-origin:0 0">Risk Title</div>
<div class="hd" style="left:532px;top:205.6px;transform:scaleX(0.864);transform-origin:0 0">Risk Definition</div>
<div class="hd" style="left:845px;width:84px;top:205.6px;text-align:center"><span style="display:inline-block;transform:scaleX(0.839)">Risk Ranking</span></div>
<div class="hd" style="left:929px;width:84px;top:205.6px;text-align:center"><span style="display:inline-block;transform:scaleX(0.832)">Control Type</span></div>
<div class="ct" style="left:13px;width:84px;top:231.8px;text-align:center"><span style="display:inline-block;transform:scaleX(0.842)">STR0001</span></div>
<div class="ct" style="left:97px;width:65px;top:231.8px;text-align:center"><span style="display:inline-block;transform:scaleX(1.0)">1</span></div>
<div class="ct" style="left:162px;width:74px;top:231.8px;text-align:center"><span style="display:inline-block;transform:scaleX(0.893)">1.01.2020</span></div>
<div class="ct" style="left:236px;width:72px;top:231.8px;text-align:center"><span style="display:inline-block;transform:scaleX(0.935)">Level 1</span></div>
<div class="ct" style="left:308px;width:104px;top:231.8px;text-align:center"><span style="display:inline-block;transform:scaleX(0.99)">Lack of Design</span></div>
<div class="ct" style="left:414px;top:231.8px;transform:scaleX(1.05);transform-origin:0 0">Sanitation</div>
<div class="ct" style="left:532px;top:231.8px;transform:scaleX(1.047);transform-origin:0 0">Stairs get slippery when the vantilation is off for hours.</div>
<div class="ct" style="left:845px;width:84px;top:231.8px;text-align:center"><span style="display:inline-block;transform:scaleX(0.972)">Very High</span></div>
<div class="ct" style="left:929px;width:84px;top:231.8px;text-align:center"><span style="display:inline-block;transform:scaleX(1.059)">Manual</span></div>
<div class="ct" style="left:13px;width:84px;top:257.32px;text-align:center"><span style="display:inline-block;transform:scaleX(0.842)">STR0002</span></div>
<div class="ct" style="left:97px;width:65px;top:257.32px;text-align:center"><span style="display:inline-block;transform:scaleX(1.0)">2</span></div>
<div class="ct" style="left:162px;width:74px;top:257.32px;text-align:center"><span style="display:inline-block;transform:scaleX(0.893)">2.01.2020</span></div>
<div class="ct" style="left:236px;width:72px;top:257.32px;text-align:center"><span style="display:inline-block;transform:scaleX(0.935)">Level 2</span></div>
<div class="ct" style="left:308px;width:104px;top:257.32px;text-align:center"><span style="display:inline-block;transform:scaleX(0.998)">Lack of Management</span></div>
<div class="ct" style="left:414px;top:257.32px;transform:scaleX(1.008);transform-origin:0 0">Usage of Equipments</div>
<div class="ct" style="left:532px;top:257.32px;transform:scaleX(1.018);transform-origin:0 0">Some misusage of equipments have been observed. Will check again</div>
<div class="ct" style="left:845px;width:84px;top:257.32px;text-align:center"><span style="display:inline-block;transform:scaleX(1.0)">High</span></div>
<div class="ct" style="left:929px;width:84px;top:257.32px;text-align:center"><span style="display:inline-block;transform:scaleX(1.035)">IT Dependant*</span></div>
<div class="ct" style="left:13px;width:84px;top:282.84000000000003px;text-align:center"><span style="display:inline-block;transform:scaleX(0.842)">STR0003</span></div>
<div class="ct" style="left:97px;width:65px;top:282.84000000000003px;text-align:center"><span style="display:inline-block;transform:scaleX(1.0)">3</span></div>
<div class="ct" style="left:162px;width:74px;top:282.84000000000003px;text-align:center"><span style="display:inline-block;transform:scaleX(0.893)">3.01.2020</span></div>
<div class="ct" style="left:236px;width:72px;top:282.84000000000003px;text-align:center"><span style="display:inline-block;transform:scaleX(0.935)">Level 3</span></div>
<div class="ct" style="left:308px;width:104px;top:282.84000000000003px;text-align:center"><span style="display:inline-block;transform:scaleX(0.998)">Lack of Management</span></div>
<div class="ct" style="left:414px;top:282.84000000000003px;transform:scaleX(1.003);transform-origin:0 0">Flammable Gas</div>
<div class="ct" style="left:532px;top:277.04px;line-height:12.5px;transform:scaleX(1.017);transform-origin:0 0">The procedures for gas transportation have changed. Procedures will be
changed</div>
<div class="ct" style="left:845px;width:84px;top:282.84000000000003px;text-align:center"><span style="display:inline-block;transform:scaleX(0.918)">Low</span></div>
<div class="ct" style="left:929px;width:84px;top:282.84000000000003px;text-align:center"><span style="display:inline-block;transform:scaleX(1.059)">Manual</span></div>
<div class="ct" style="left:13px;width:84px;top:308.36px;text-align:center"><span style="display:inline-block;transform:scaleX(0.842)">STR0004</span></div>
<div class="ct" style="left:97px;width:65px;top:308.36px;text-align:center"><span style="display:inline-block;transform:scaleX(1.0)">4</span></div>
<div class="ct" style="left:162px;width:74px;top:308.36px;text-align:center"><span style="display:inline-block;transform:scaleX(0.893)">4.01.2020</span></div>
<div class="ct" style="left:236px;width:72px;top:308.36px;text-align:center"><span style="display:inline-block;transform:scaleX(0.935)">Level 4</span></div>
<div class="ct" style="left:308px;width:104px;top:308.36px;text-align:center"><span style="display:inline-block;transform:scaleX(0.998)">Lack of Management</span></div>
<div class="ct" style="left:414px;top:308.36px;transform:scaleX(0.982);transform-origin:0 0">Standard Procedures</div>
<div class="ct" style="left:532px;top:308.36px;transform:scaleX(1.002);transform-origin:0 0">Due to COVID-19 our standard procedures will change accordingly</div>
<div class="ct" style="left:845px;width:84px;top:308.36px;text-align:center"><span style="display:inline-block;transform:scaleX(0.972)">Very High</span></div>
<div class="ct" style="left:929px;width:84px;top:308.36px;text-align:center"><span style="display:inline-block;transform:scaleX(1.035)">IT Dependant*</span></div>
<div class="ct" style="left:13px;width:84px;top:333.88px;text-align:center"><span style="display:inline-block;transform:scaleX(0.842)">STR0005</span></div>
<div class="ct" style="left:97px;width:65px;top:333.88px;text-align:center"><span style="display:inline-block;transform:scaleX(1.0)">5</span></div>
<div class="ct" style="left:162px;width:74px;top:333.88px;text-align:center"><span style="display:inline-block;transform:scaleX(0.893)">4.01.2020</span></div>
<div class="ct" style="left:236px;width:72px;top:333.88px;text-align:center"><span style="display:inline-block;transform:scaleX(0.935)">Level 2</span></div>
<div class="ct" style="left:308px;width:104px;top:333.88px;text-align:center"><span style="display:inline-block;transform:scaleX(0.998)">Lack of Management</span></div>
<div class="ct" style="left:414px;top:333.88px;transform:scaleX(0.996);transform-origin:0 0">Office Hours</div>
<div class="ct" style="left:532px;top:333.88px;transform:scaleX(1.049);transform-origin:0 0">Due to the latest procedures a stable schedule table will be formed</div>
<div class="ct" style="left:845px;width:84px;top:333.88px;text-align:center"><span style="display:inline-block;transform:scaleX(0.918)">Low</span></div>
<div class="ct" style="left:929px;width:84px;top:333.88px;text-align:center"><span style="display:inline-block;transform:scaleX(1.059)">Manual</span></div>
<div class="ct" style="left:13px;width:84px;top:359.40000000000003px;text-align:center"><span style="display:inline-block;transform:scaleX(0.842)">STR0006</span></div>
<div class="ct" style="left:97px;width:65px;top:359.40000000000003px;text-align:center"><span style="display:inline-block;transform:scaleX(1.0)">6</span></div>
<div class="ct" style="left:162px;width:74px;top:359.40000000000003px;text-align:center"><span style="display:inline-block;transform:scaleX(0.893)">7.01.2020</span></div>
<div class="ct" style="left:236px;width:72px;top:359.40000000000003px;text-align:center"><span style="display:inline-block;transform:scaleX(0.935)">Level 3</span></div>
<div class="ct" style="left:308px;width:104px;top:359.40000000000003px;text-align:center"><span style="display:inline-block;transform:scaleX(0.99)">Lack of Design</span></div>
<div class="ct" style="left:414px;top:359.40000000000003px;transform:scaleX(0.94);transform-origin:0 0">Emergency Exit</div>
<div class="ct" style="left:532px;top:359.40000000000003px;transform:scaleX(1.002);transform-origin:0 0">1 Emergency Exit door&#39;s sight has been covered with a door</div>
<div class="ct" style="left:845px;width:84px;top:359.40000000000003px;text-align:center"><span style="display:inline-block;transform:scaleX(0.972)">Very High</span></div>
<div class="ct" style="left:929px;width:84px;top:359.40000000000003px;text-align:center"><span style="display:inline-block;transform:scaleX(1.035)">IT Dependant*</span></div>
<div class="ct" style="left:13px;width:84px;top:384.92px;text-align:center"><span style="display:inline-block;transform:scaleX(0.842)">STR0007</span></div>
<div class="ct" style="left:97px;width:65px;top:384.92px;text-align:center"><span style="display:inline-block;transform:scaleX(1.0)">7</span></div>
<div class="ct" style="left:162px;width:74px;top:384.92px;text-align:center"><span style="display:inline-block;transform:scaleX(0.893)">15.01.2020</span></div>
<div class="ct" style="left:236px;width:72px;top:384.92px;text-align:center"><span style="display:inline-block;transform:scaleX(0.935)">Level 2</span></div>
<div class="ct" style="left:308px;width:104px;top:384.92px;text-align:center"><span style="display:inline-block;transform:scaleX(0.99)">Lack of Design</span></div>
<div class="ct" style="left:414px;top:384.92px;transform:scaleX(1.042);transform-origin:0 0">Possible Injuries</div>
<div class="ct" style="left:532px;top:384.92px;transform:scaleX(1.002);transform-origin:0 0">1 Emergency Exit door&#39;s sight has been covered with a door</div>
<div class="ct" style="left:845px;width:84px;top:384.92px;text-align:center"><span style="display:inline-block;transform:scaleX(1.0)">High</span></div>
<div class="ct" style="left:929px;width:84px;top:384.92px;text-align:center"><span style="display:inline-block;transform:scaleX(1.059)">Manual</span></div>
<div class="ct" style="left:13px;width:84px;top:410.44px;text-align:center"><span style="display:inline-block;transform:scaleX(0.842)">STR0008</span></div>
<div class="ct" style="left:97px;width:65px;top:410.44px;text-align:center"><span style="display:inline-block;transform:scaleX(1.0)">8</span></div>
<div class="ct" style="left:162px;width:74px;top:410.44px;text-align:center"><span style="display:inline-block;transform:scaleX(0.893)">22.01.2020</span></div>
<div class="ct" style="left:236px;width:72px;top:410.44px;text-align:center"><span style="display:inline-block;transform:scaleX(0.935)">Level 1</span></div>
<div class="ct" style="left:308px;width:104px;top:410.44px;text-align:center"><span style="display:inline-block;transform:scaleX(0.998)">Lack of Management</span></div>
<div class="ct" style="left:414px;top:410.44px;transform:scaleX(0.905);transform-origin:0 0">Bugs</div>
<div class="ct" style="left:532px;top:410.44px;transform:scaleX(1.033);transform-origin:0 0">If the room is not cleaned properly bugs come out</div>
<div class="ct" style="left:845px;width:84px;top:410.44px;text-align:center"><span style="display:inline-block;transform:scaleX(0.918)">Low</span></div>
<div class="ct" style="left:929px;width:84px;top:410.44px;text-align:center"><span style="display:inline-block;transform:scaleX(1.035)">IT Dependant*</span></div>
<div class="ct" style="left:13px;width:84px;top:435.96px;text-align:center"><span style="display:inline-block;transform:scaleX(0.842)">STR0008</span></div>
<div class="ct" style="left:97px;width:65px;top:435.96px;text-align:center"><span style="display:inline-block;transform:scaleX(1.0)">8</span></div>
<div class="ct" style="left:162px;width:74px;top:435.96px;text-align:center"><span style="display:inline-block;transform:scaleX(0.893)">22.01.2020</span></div>
<div class="ct" style="left:236px;width:72px;top:435.96px;text-align:center"><span style="display:inline-block;transform:scaleX(0.935)">Level 1</span></div>
<div class="ct" style="left:308px;width:104px;top:435.96px;text-align:center"><span style="display:inline-block;transform:scaleX(0.998)">Lack of Management</span></div>
<div class="ct" style="left:414px;top:435.96px;transform:scaleX(0.905);transform-origin:0 0">Bugs</div>
<div class="ct" style="left:532px;top:435.96px;transform:scaleX(1.033);transform-origin:0 0">If the room is not cleaned properly bugs come out</div>
<div class="ct" style="left:845px;width:84px;top:435.96px;text-align:center"><span style="display:inline-block;transform:scaleX(0.918)">Low</span></div>
<div class="ct" style="left:929px;width:84px;top:435.96px;text-align:center"><span style="display:inline-block;transform:scaleX(1.035)">IT Dependant*</span></div>
<div class="ct" style="left:13px;width:84px;top:461.48px;text-align:center"><span style="display:inline-block;transform:scaleX(0.842)">STR0005</span></div>
<div class="ct" style="left:97px;width:65px;top:461.48px;text-align:center"><span style="display:inline-block;transform:scaleX(1.0)">5</span></div>
<div class="ct" style="left:162px;width:74px;top:461.48px;text-align:center"><span style="display:inline-block;transform:scaleX(0.893)">4.01.2020</span></div>
<div class="ct" style="left:236px;width:72px;top:461.48px;text-align:center"><span style="display:inline-block;transform:scaleX(0.935)">Level 2</span></div>
<div class="ct" style="left:308px;width:104px;top:461.48px;text-align:center"><span style="display:inline-block;transform:scaleX(0.998)">Lack of Management</span></div>
<div class="ct" style="left:414px;top:461.48px;transform:scaleX(0.996);transform-origin:0 0">Office Hours</div>
<div class="ct" style="left:532px;top:461.48px;transform:scaleX(1.049);transform-origin:0 0">Due to the latest procedures a stable schedule table will be formed</div>
<div class="ct" style="left:845px;width:84px;top:461.48px;text-align:center"><span style="display:inline-block;transform:scaleX(0.918)">Low</span></div>
<div class="ct" style="left:929px;width:84px;top:461.48px;text-align:center"><span style="display:inline-block;transform:scaleX(1.059)">Manual</span></div>
</body></html>
